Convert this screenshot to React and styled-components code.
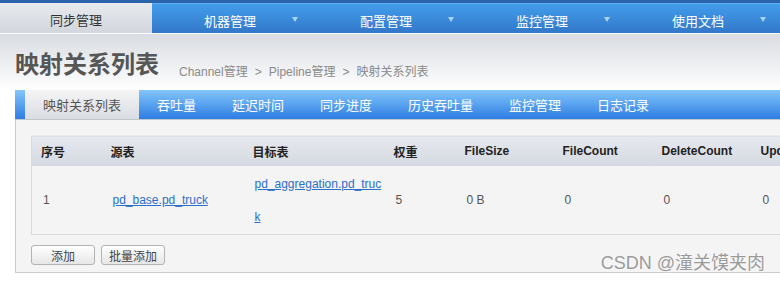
import React from 'react';
import styled, { createGlobalStyle } from 'styled-components';

const GlobalStyle = createGlobalStyle`
  html, body {
    margin: 0;
    padding: 0;
    background: #ffffff;
    font-family: "Liberation Sans", "Noto Sans CJK SC", sans-serif;
  }
`;

const navItems = [
  { label: '同步管理', active: true },
  { label: '机器管理' },
  { label: '配置管理' },
  { label: '监控管理' },
  { label: '使用文档' },
];

const tabs = ['映射关系列表', '吞吐量', '延迟时间', '同步进度', '历史吞吐量', '监控管理', '日志记录'];

const columns = [
  { key: 'seq', title: '序号', width: 70 },
  { key: 'source', title: '源表', width: 142 },
  { key: 'target', title: '目标表', width: 141 },
  { key: 'weight', title: '权重', width: 71 },
  { key: 'size', title: 'FileSize', width: 98 },
  { key: 'count', title: 'FileCount', width: 99 },
  { key: 'del', title: 'DeleteCount', width: 99 },
  { key: 'upd', title: 'UpdateCount', width: 110 },
];

const rows = [
  {
    seq: '1',
    source: 'pd_base.pd_truck',
    target: 'pd_aggregation.pd_truck',
    weight: '5',
    size: '0 B',
    count: '0',
    del: '0',
    upd: '0',
  },
];

const Page = styled.div`
  position: relative;
  width: 780px;
  height: 282px;
  overflow: hidden;
`;

const TopStrip = styled.div`
  height: 3px;
  background: #2b64ad;
`;

const NavBar = styled.nav`
  display: flex;
  height: 31px;
  box-sizing: border-box;
  border-top: 1px solid #5cb0f2;
  border-bottom: 1px solid #ffffff;
  background: linear-gradient(#429deb, #3377c9);
`;

const NavItem = styled.div`
  position: relative;
  flex: 0 0 ${p => (p.$active ? 152 : 156)}px;
  display: flex;
  align-items: center;
  justify-content: center;
  padding-top: 3px;
  box-sizing: border-box;
  margin-top: ${p => (p.$active ? '-1px' : '0')};
  font-size: 13px;
  color: ${p => (p.$active ? '#333333' : '#ffffff')};
  background: ${p => (p.$active ? 'linear-gradient(#e8eaee, #d2d6dd)' : 'transparent')};
`;

const NavArrow = styled.span`
  position: absolute;
  right: 10px;
  top: 13px;
  width: 0;
  height: 0;
  border-left: 3px solid transparent;
  border-right: 3px solid transparent;
  border-top: 5px solid #a9d2f6;
`;

const Header = styled.header`
  display: flex;
  align-items: flex-end;
  height: 56px;
  box-sizing: border-box;
  padding: 0 15px 9px;
  background: linear-gradient(#d9dce2, #ffffff);
`;

const Title = styled.h1`
  margin: 0;
  font-size: 24px;
  line-height: 32px;
  font-weight: bold;
  color: #565656;
`;

const Crumbs = styled.div`
  margin-left: 20px;
  padding-bottom: 2px;
  font-size: 12px;
  line-height: 14px;
  color: #8a8a8a;
`;

const Sep = styled.span`
  margin: 0 7px;
`;

const TabBar = styled.div`
  display: flex;
  margin-left: 15px;
  height: 29px;
  padding-left: 10px;
  background: linear-gradient(#82c6fb, #2e7de2);
  border-bottom: 1px solid #c2c6cc;
`;

const Tab = styled.div`
  display: flex;
  align-items: center;
  justify-content: center;
  box-sizing: border-box;
  ${p => (p.$active ? 'width: 114px;' : 'padding: 0 18px;')}
  font-size: 13px;
  color: ${p => (p.$active ? '#555555' : '#ffffff')};
  background: ${p => (p.$active ? 'linear-gradient(#f5f5f6, #d9dce1)' : 'transparent')};
`;

const Panel = styled.section`
  margin-left: 15px;
  padding: 15px 0 7px 15px;
  background: #f4f4f4;
  border-left: 1px solid #cccccc;
  border-bottom: 1px solid #cccccc;
  overflow: hidden;
`;

const Table = styled.table`
  table-layout: fixed;
  border-collapse: collapse;
  width: 830px;
  border: 1px solid #dadada;
  font-size: 12px;
`;

const Th = styled.th`
  height: 30px;
  padding: 0 0 0 9px;
  text-align: left;
  font-weight: bold;
  color: #222222;
  white-space: nowrap;
  overflow: hidden;
  background: linear-gradient(#e6e9ee, #d4d9e1);
  border-top: 1px solid #e9ebee;
  border-bottom: 1px dashed #f4f4f4;
`;

const Td = styled.td`
  height: 67px;
  padding: 0 0 0 11px;
  line-height: 33px;
  color: #555555;
  vertical-align: middle;
`;

const Link = styled.a`
  color: #2a6fcb;
  text-decoration: underline;
  cursor: pointer;
`;

const WrapLink = styled(Link)`
  display: inline-block;
  width: 129px;
  word-break: break-all;
`;

const Actions = styled.div`
  display: flex;
  gap: 6px;
  margin-top: 10px;
`;

const Button = styled.button`
  width: 64px;
  height: 20px;
  padding: 0;
  border: 1px solid #b3b3b3;
  border-radius: 3px;
  background: linear-gradient(#ffffff, #e6e6e6);
  font-family: inherit;
  font-size: 12px;
  color: #444444;
  cursor: pointer;
`;

const Watermark = styled.div`
  position: absolute;
  right: 15px;
  bottom: 8px;
  font-size: 18px;
  color: #9a9a9a;
  text-shadow: 0 0 2px #ffffff;
  pointer-events: none;
`;

const renderCell = (col, row) => {
  if (col.key === 'source') return <Link>{row.source}</Link>;
  if (col.key === 'target') return <WrapLink>{row.target}</WrapLink>;
  return row[col.key];
};

export default function App() {
  return (
    <Page>
      <GlobalStyle />
      <TopStrip />
      <NavBar>
        {navItems.map(item => (
          <NavItem key={item.label} $active={item.active}>
            {item.label}
            {!item.active && <NavArrow />}
          </NavItem>
        ))}
      </NavBar>
      <Header>
        <Title>映射关系列表</Title>
        <Crumbs>
          Channel管理<Sep>&gt;</Sep>Pipeline管理<Sep>&gt;</Sep>映射关系列表
        </Crumbs>
      </Header>
      <TabBar>
        {tabs.map((t, i) => (
          <Tab key={t} $active={i === 0}>{t}</Tab>
        ))}
      </TabBar>
      <Panel>
        <Table>
          <colgroup>
            {columns.map(c => (
              <col key={c.key} style={{ width: c.width }} />
            ))}
          </colgroup>
          <thead>
            <tr>
              {columns.map(c => (
                <Th key={c.key}>{c.title}</Th>
              ))}
            </tr>
          </thead>
          <tbody>
            {rows.map(r => (
              <tr key={r.seq}>
                {columns.map(c => (
                  <Td key={c.key}>{renderCell(c, r)}</Td>
                ))}
              </tr>
            ))}
          </tbody>
        </Table>
        <Actions>
          <Button>添加</Button>
          <Button>批量添加</Button>
        </Actions>
      </Panel>
      <Watermark>CSDN @潼关馍夹肉</Watermark>
    </Page>
  );
}
